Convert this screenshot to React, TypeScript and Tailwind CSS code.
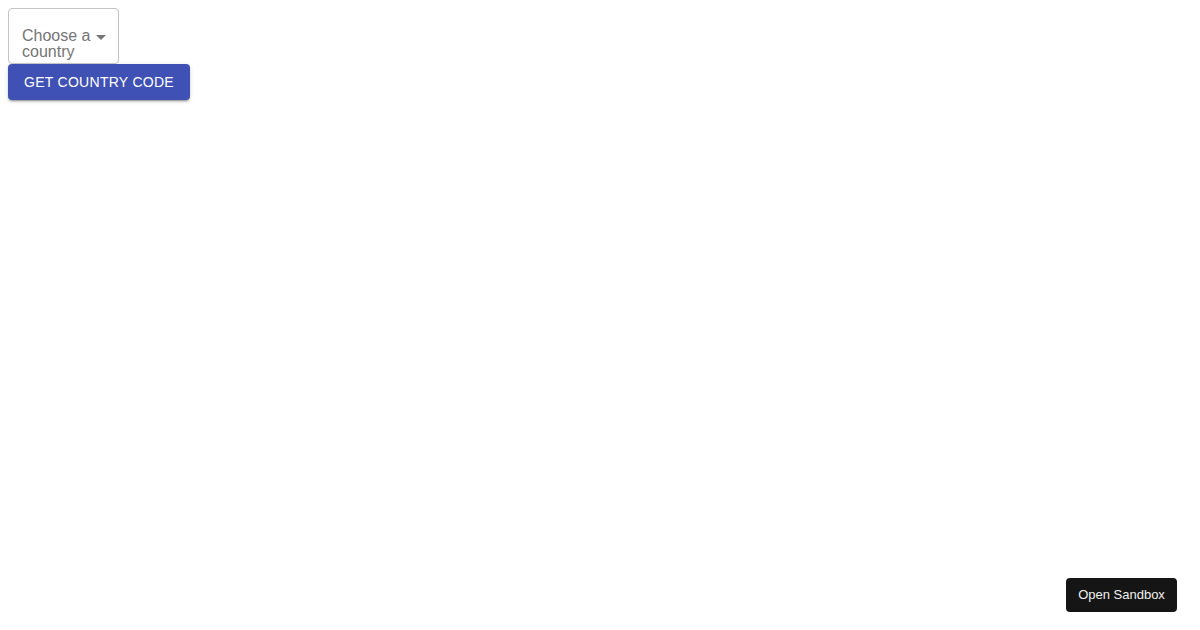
export default function App() {
  return (
    <div className="relative h-[630px] w-full bg-white font-['Liberation_Sans',Arial,sans-serif]">
      <div className="flex flex-col items-start p-2">
        <div className="relative h-[56px] w-[111px] rounded border border-[#c4c4c4] pl-[13px] pt-[19px]">
          <div className="w-[72px] text-base leading-4 text-[#757575]">Choose a country</div>
          <svg
            viewBox="0 0 24 24"
            className="absolute left-[80px] top-[16px] h-6 w-6 fill-[#757575]"
          >
            <path d="M7 10l5 5 5-5z" />
          </svg>
        </div>
        <button
          type="button"
          className="h-9 w-[182px] rounded bg-[#3f51b5] text-center text-[14px] font-medium uppercase tracking-[0.02em] text-white shadow-[0_3px_1px_-2px_rgba(0,0,0,0.2),0_2px_2px_0_rgba(0,0,0,0.14),0_1px_5px_0_rgba(0,0,0,0.12)]"
        >
          Get Country Code
        </button>
      </div>
      <button
        type="button"
        className="absolute bottom-[18px] right-[23px] h-[34px] w-[111px] rounded bg-[#151515] text-[13px] text-[#f0f0f0]"
      >
        Open Sandbox
      </button>
    </div>
  );
}
